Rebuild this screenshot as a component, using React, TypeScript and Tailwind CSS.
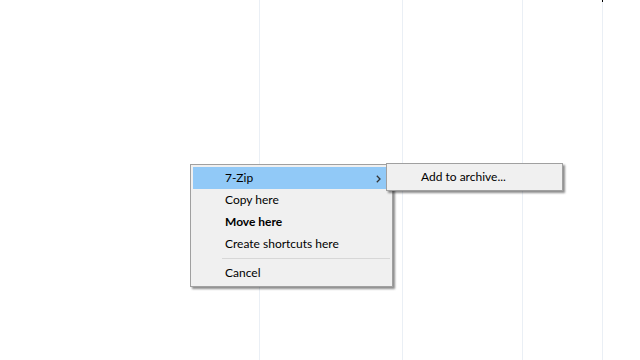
import React from "react";

const font = { fontFamily: '"Segoe UI", Lato, "Noto Sans", sans-serif' };

function Item({ label, bold, highlight, arrow }: { label: string; bold?: boolean; highlight?: boolean; arrow?: boolean }) {
  return (
    <div className={`relative flex h-[22px] items-center pl-[32px] text-[12px] text-black ${highlight ? "bg-[#91c9f7]" : ""} ${bold ? "font-bold" : ""}`}>
      <span className="leading-none">{label}</span>
      {arrow && (
        <svg className="absolute right-[9px] top-[8px]" width="5" height="8" viewBox="0 0 5 8">
          <path d="M0.8 0.8 L4 4 L0.8 7.2" fill="none" stroke="#333" strokeWidth="1.3" />
        </svg>
      )}
    </div>
  );
}

export default function App() {
  return (
    <div className="relative h-[360px] w-[640px] overflow-hidden bg-white" style={font}>
      <div className="flex h-full">
        <div className="h-full w-[260px] border-r border-[#eaeff5]" />
        <div className="h-full w-[143px] border-r border-[#eaeff5]" />
        <div className="h-full w-[120px] border-r border-[#eaeff5]" />
        <div className="h-full w-[80px] border-r border-[#eaeff5]" />
      </div>
      <div className="absolute left-[602px] top-0 h-[2px] w-[1px] bg-black" />

      <div className="absolute left-[190px] top-[164px] w-[203px] border border-[#a0a0a0] bg-[#f0f0f0] p-[2px] shadow-[2px_2px_2px_rgba(0,0,0,0.45)]">
        <Item label="7-Zip" highlight arrow />
        <Item label="Copy here" />
        <Item label="Move here" bold />
        <Item label="Create shortcuts here" />
        <div className="flex h-[7px] items-center pl-[29px]">
          <div className="h-[1px] w-full bg-[#d7d7d7]" />
        </div>
        <Item label="Cancel" />
      </div>

      <div className="absolute left-[386px] top-[163px] w-[177px] border border-[#a0a0a0] bg-[#f0f0f0] p-[2px] shadow-[2px_2px_2px_rgba(0,0,0,0.45)]">
        <Item label="Add to archive..." />
      </div>
    </div>
  );
}
